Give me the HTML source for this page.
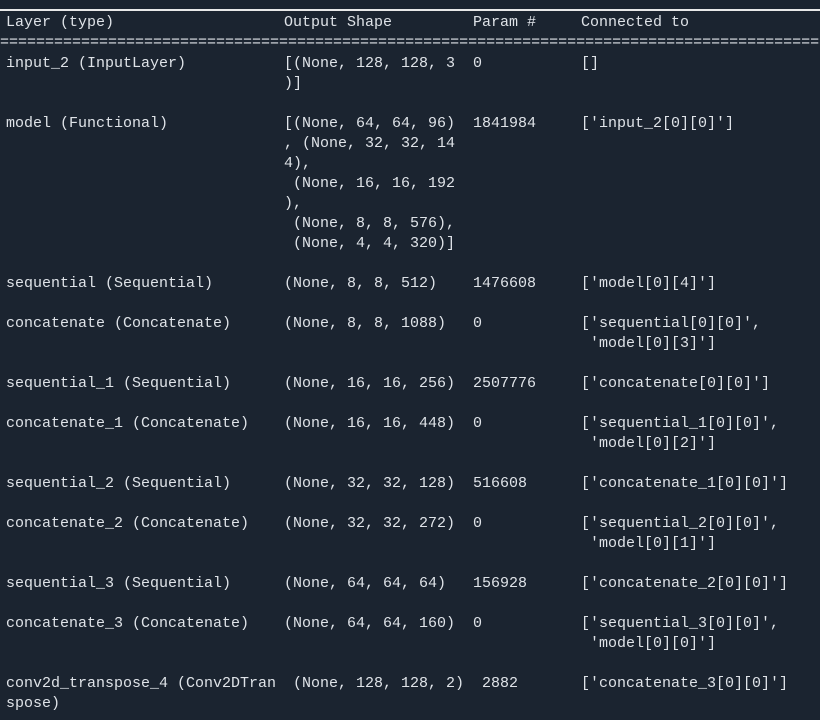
<!DOCTYPE html>
<html><head><style>
body{margin:0;width:820px;height:720px;background:#1b2430;overflow:hidden;position:relative;font-family:"Liberation Mono",monospace;font-size:15px;color:#dfe3e8;}
.t{position:absolute;white-space:pre;line-height:20px;height:20px;}
.hl{position:absolute;left:0;top:9px;width:820px;height:2px;background:#e8e8e8;}
.eq{position:absolute;left:0;top:33px;width:820px;height:20px;overflow:hidden;white-space:pre;line-height:20px;}
</style></head><body>
<div class="hl"></div>
<div class="t" style="left:6px;top:13px">Layer (type)</div>
<div class="t" style="left:284px;top:13px">Output Shape</div>
<div class="t" style="left:473px;top:13px">Param #</div>
<div class="t" style="left:581px;top:13px">Connected to</div>
<div class="eq">==========================================================================================================</div>

<div class="t" style="left:6px;top:54px">input_2 (InputLayer)</div>
<div class="t" style="left:284px;top:54px">[(None, 128, 128, 3
)]</div>
<div class="t" style="left:473px;top:54px">0</div>
<div class="t" style="left:581px;top:54px">[]</div>

<div class="t" style="left:6px;top:114px">model (Functional)</div>
<div class="t" style="left:284px;top:114px">[(None, 64, 64, 96)
, (None, 32, 32, 14
4),
 (None, 16, 16, 192
),
 (None, 8, 8, 576),
 (None, 4, 4, 320)]</div>
<div class="t" style="left:473px;top:114px">1841984</div>
<div class="t" style="left:581px;top:114px">['input_2[0][0]']</div>

<div class="t" style="left:6px;top:274px">sequential (Sequential)</div>
<div class="t" style="left:284px;top:274px">(None, 8, 8, 512)</div>
<div class="t" style="left:473px;top:274px">1476608</div>
<div class="t" style="left:581px;top:274px">['model[0][4]']</div>

<div class="t" style="left:6px;top:314px">concatenate (Concatenate)</div>
<div class="t" style="left:284px;top:314px">(None, 8, 8, 1088)</div>
<div class="t" style="left:473px;top:314px">0</div>
<div class="t" style="left:581px;top:314px">['sequential[0][0]',
 'model[0][3]']</div>

<div class="t" style="left:6px;top:374px">sequential_1 (Sequential)</div>
<div class="t" style="left:284px;top:374px">(None, 16, 16, 256)</div>
<div class="t" style="left:473px;top:374px">2507776</div>
<div class="t" style="left:581px;top:374px">['concatenate[0][0]']</div>

<div class="t" style="left:6px;top:414px">concatenate_1 (Concatenate)</div>
<div class="t" style="left:284px;top:414px">(None, 16, 16, 448)</div>
<div class="t" style="left:473px;top:414px">0</div>
<div class="t" style="left:581px;top:414px">['sequential_1[0][0]',
 'model[0][2]']</div>

<div class="t" style="left:6px;top:474px">sequential_2 (Sequential)</div>
<div class="t" style="left:284px;top:474px">(None, 32, 32, 128)</div>
<div class="t" style="left:473px;top:474px">516608</div>
<div class="t" style="left:581px;top:474px">['concatenate_1[0][0]']</div>

<div class="t" style="left:6px;top:514px">concatenate_2 (Concatenate)</div>
<div class="t" style="left:284px;top:514px">(None, 32, 32, 272)</div>
<div class="t" style="left:473px;top:514px">0</div>
<div class="t" style="left:581px;top:514px">['sequential_2[0][0]',
 'model[0][1]']</div>

<div class="t" style="left:6px;top:574px">sequential_3 (Sequential)</div>
<div class="t" style="left:284px;top:574px">(None, 64, 64, 64)</div>
<div class="t" style="left:473px;top:574px">156928</div>
<div class="t" style="left:581px;top:574px">['concatenate_2[0][0]']</div>

<div class="t" style="left:6px;top:614px">concatenate_3 (Concatenate)</div>
<div class="t" style="left:284px;top:614px">(None, 64, 64, 160)</div>
<div class="t" style="left:473px;top:614px">0</div>
<div class="t" style="left:581px;top:614px">['sequential_3[0][0]',
 'model[0][0]']</div>

<div class="t" style="left:6px;top:674px">conv2d_transpose_4 (Conv2DTran
spose)</div>
<div class="t" style="left:293px;top:674px">(None, 128, 128, 2)</div>
<div class="t" style="left:482px;top:674px">2882</div>
<div class="t" style="left:581px;top:674px">['concatenate_3[0][0]']</div>
</body></html>
